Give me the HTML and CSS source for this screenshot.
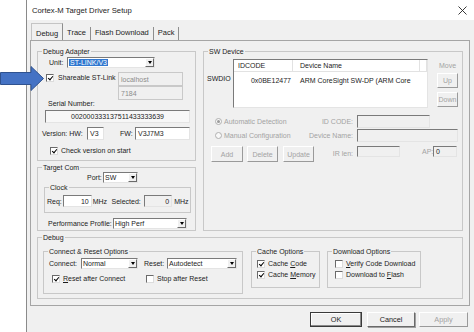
FILE: index.html
```html
<!DOCTYPE html>
<html lang="en">
<head>
  <meta charset="UTF-8" />
  <title>Cortex-M Target Driver Setup</title>
  <link rel="stylesheet" href="styles.css">
</head>
<body>
  <!-- annotation arrow pointing at the shareable checkbox -->
  <svg class="arrow" width="46" height="28" viewBox="0 0 46 28">
    <path d="M0.5 7.5 H31 V1.5 L43.5 13.5 L31 25.5 V19.5 H0.5 Z" fill="#4472c4" stroke="#2f528f" stroke-width="1"/>
  </svg>

  <div class="window">
    <div class="titlebar">
      <span>Cortex-M Target Driver Setup</span>
      <svg width="9" height="9" viewBox="0 0 9 9"><path d="M0.5 0.5 L8.5 8.5 M8.5 0.5 L0.5 8.5" stroke="#222" stroke-width="0.9"/></svg>
    </div>

    <div class="tabs">
      <span class="tab active">Debug</span>
      <span class="tab">Trace</span>
      <span class="tab">Flash Download</span>
      <span class="tab">Pack</span>
    </div>

    <div class="panel">
      <div class="top">
        <div class="col-left">
          <fieldset class="group adapter">
            <legend>Debug Adapter</legend>
            <div class="row unit-row">
              <span class="w-unit">Unit:</span>
              <span class="select sel-unit"><span class="sel-text"><span class="hl">ST-LINK/V3</span></span><span class="drop"></span></span>
            </div>
            <div class="row share-row">
              <span class="cb on"></span>
              <span class="share-text">Shareable ST-Link</span>
              <div class="stack">
                <span class="field dis">localhost</span>
                <span class="field dis">7184</span>
              </div>
            </div>
            <div class="row serial-label">Serial Number:</div>
            <div class="field serial">002000333137511433333639</div>
            <div class="row version-row">
              <span class="w-ver">Version: HW:</span>
              <span class="field hw">V3</span>
              <span class="w-fw">FW:</span>
              <span class="field fw">V3J7M3</span>
            </div>
            <div class="row check-row">
              <span class="cb on"></span><span class="cb-text">Check version on start</span>
            </div>
          </fieldset>

          <fieldset class="group target">
            <legend>Target Com</legend>
            <div class="row port-row">
              <span class="w-port">Port:</span>
              <span class="select sel-port"><span class="sel-text">SW</span><span class="drop"></span></span>
            </div>
            <fieldset class="group clock">
              <legend>Clock</legend>
              <div class="row req-row">
                <span class="w-req">Req:</span>
                <span class="field num req">10</span>
                <span class="mhz">MHz</span>
                <span class="w-sel">Selected:</span>
                <span class="field num selected">0</span>
                <span class="mhz mhz2">MHz</span>
              </div>
            </fieldset>
            <div class="row perf-row">
              <span class="w-perf">Performance Profile:</span>
              <span class="select sel-perf"><span class="sel-text">High Perf</span><span class="drop"></span></span>
            </div>
          </fieldset>
        </div>

        <fieldset class="group sw">
          <legend>SW Device</legend>
          <div class="row sw-top">
            <span class="swdio">SWDIO</span>
            <div class="list">
              <div class="list-head">
                <span class="col-id">IDCODE</span>
                <span class="col-name">Device Name</span>
                <span class="col-rest"></span>
              </div>
              <div class="list-row">
                <span class="col-id num-cell">0x0BE12477</span>
                <span class="col-name">ARM CoreSight SW-DP (ARM Core</span>
              </div>
            </div>
            <div class="move-col">
              <span class="move-label">Move</span>
              <span class="btn dis up">Up</span>
              <span class="btn dis down">Down</span>
            </div>
          </div>
          <div class="row sw-row row-a">
            <span class="sw-left"><span class="radio on"></span><span class="off-text">Automatic Detection</span></span>
            <span class="sw-label">ID CODE:</span>
            <span class="field sunk id-code"></span>
          </div>
          <div class="row sw-row row-b">
            <span class="sw-left"><span class="radio"></span><span class="off-text">Manual Configuration</span></span>
            <span class="sw-label">Device Name:</span>
            <span class="field sunk dev-name"></span>
          </div>
          <div class="row sw-row row-c">
            <span class="sw-left">
              <span class="btn dis add">Add</span>
              <span class="btn dis delete">Delete</span>
              <span class="btn dis update">Update</span>
            </span>
            <span class="sw-label">IR len:</span>
            <span class="ir-fields">
              <span class="field sunk ir-len"></span>
              <span class="off-text ap-label">AP:</span>
              <span class="field sunk ap">0</span>
            </span>
          </div>
        </fieldset>
      </div>

      <fieldset class="group debug">
        <legend>Debug</legend>
        <div class="debug-row">
          <fieldset class="group connect">
            <legend>Connect &amp; Reset Options</legend>
            <div class="row connect-row">
              <span class="w-conn">Connect:</span>
              <span class="select sel-conn"><span class="sel-text">Normal</span><span class="drop"></span></span>
              <span class="w-reset">Reset:</span>
              <span class="select sel-reset"><span class="sel-text">Autodetect</span><span class="drop"></span></span>
            </div>
            <div class="row reset-checks">
              <span class="opt opt-first"><span class="cb on"></span><span class="cb-text"><u>R</u>eset after Connect</span></span>
              <span class="opt"><span class="cb"></span><span class="cb-text">Stop after Reset</span></span>
            </div>
          </fieldset>

          <fieldset class="group cache">
            <legend>Cache Options</legend>
            <div class="row opt-row first"><span class="cb on"></span><span class="cb-text">Cache <u>C</u>ode</span></div>
            <div class="row opt-row"><span class="cb on"></span><span class="cb-text">Cache <u>M</u>emory</span></div>
          </fieldset>

          <fieldset class="group download">
            <legend>Download Options</legend>
            <div class="row opt-row first"><span class="cb"></span><span class="cb-text"><u>V</u>erify Code Download</span></div>
            <div class="row opt-row"><span class="cb"></span><span class="cb-text">Download to <u>F</u>lash</span></div>
          </fieldset>
        </div>
      </fieldset>
    </div>

    <div class="actions">
      <span class="btn big default">OK</span>
      <span class="btn big cancel">Cancel</span>
      <span class="btn big dis apply">Apply</span>
    </div>
  </div>
</body>
</html>
```

FILE: styles.css
```css
:root {
  --face: #f0f0f0;
  --line: #c8c8c8;
  --dark: #7a7a7a;
  --text: #1c1c1c;
  --off: #a3a3a3;
}

* {
  box-sizing: border-box;
}

body {
  margin: 0;
  width: 474px;
  height: 332px;
  overflow: hidden;
  position: relative;
  background: #fff;
  color: var(--text);
  font-family: "Liberation Sans", Arial, sans-serif;
  font-size: 7px;
  line-height: 9px;
}

/* annotation arrow sits on top of the window edge */
.arrow {
  position: absolute;
  left: 0;
  top: 65px;
  z-index: 5;
}

.window {
  margin-left: 26px;
  width: 448px;
  height: 332px;
  border-left: 1px solid #8a8a8a;
  background: var(--face);
}

.titlebar {
  height: 20px;
  background: #fff;
  display: flex;
  align-items: center;
  justify-content: space-between;
  padding: 0 7px 0 5px;
  font-size: 7.7px;
}

/* tabs */
.tabs {
  height: 20px;
  display: flex;
  align-items: flex-end;
  padding-left: 4px;
  font-size: 7.5px;
}

.tab {
  height: 13px;
  line-height: 12px;
  padding: 0 4px;
  border-right: 1px solid #8e8e8e;
}

.tab.active {
  height: 17px;
  padding-top: 4px;
  border-left: 1px solid #c4c4c4;
  border-top: 1px solid #c4c4c4;
}

.panel {
  margin: 0 4px 0 3px;
  height: 266px;
  border: 1px solid #a5a5a5;
  padding: 6px;
}

.top {
  display: flex;
  gap: 7px;
  height: 184px;
}

.col-left {
  width: 159px;
  display: flex;
  flex-direction: column;
  gap: 2px;
}

/* group boxes */
.group {
  margin: 0;
  padding: 0;
  min-width: 0;
  border: 1px solid var(--line);
  flex: none;
}

legend {
  margin-left: 4px;
  padding: 0 1px;
  height: 9px;
  line-height: 9px;
}

.row {
  display: flex;
  align-items: center;
  white-space: nowrap;
}

/* edit boxes */
.field {
  display: flex;
  align-items: center;
  height: 13px;
  padding: 0 2px;
  background: #fff;
  border: 1px solid;
  border-color: var(--dark) #e4e4e4 #e4e4e4 var(--dark);
}

.field.dis {
  background: var(--face);
  color: #8c8c8c;
  border-color: #c9c9c9;
  width: 65px;
  height: 14px;
}

.field.sunk {
  background: var(--face);
  color: var(--off);
}

.field.num {
  justify-content: flex-end;
}

/* combo boxes */
.select {
  display: flex;
  height: 11px;
  background: #fff;
  border: 1px solid;
  border-color: var(--dark) #e4e4e4 #e4e4e4 var(--dark);
}

.sel-text {
  flex: 1;
  padding-left: 1px;
  line-height: 9px;
  overflow: hidden;
}

.hl {
  background: #3178d0;
  color: #fff;
  padding: 0 1px;
}

.drop {
  width: 9px;
  height: 9px;
  background: var(--face);
  border: 1px solid;
  border-color: #fff #6a6a6a #6a6a6a #fff;
  display: flex;
  align-items: center;
  justify-content: center;
}

.drop::after {
  content: "";
  border-left: 2.5px solid transparent;
  border-right: 2.5px solid transparent;
  border-top: 3px solid #000;
}

/* check boxes and radios */
.cb {
  width: 8px;
  height: 8px;
  flex: none;
  background: #fff;
  border: 1px solid;
  border-color: #6a6a6a #dcdcdc #dcdcdc #6a6a6a;
  display: inline-flex;
  align-items: center;
  justify-content: center;
}

.cb.on::after {
  content: "";
  width: 2px;
  height: 4px;
  margin-top: -1px;
  border: solid #000;
  border-width: 0 1.3px 1.3px 0;
  transform: rotate(40deg);
}

.cb-text {
  margin-left: 3px;
}

.radio {
  width: 7px;
  height: 7px;
  flex: none;
  border-radius: 50%;
  border: 1px solid #b0b0b0;
  background: #f8f8f8;
  display: inline-flex;
  align-items: center;
  justify-content: center;
}

.radio.on::after {
  content: "";
  width: 3px;
  height: 3px;
  border-radius: 50%;
  background: #9a9a9a;
}

.off-text {
  color: var(--off);
}

/* push buttons */
.btn {
  display: flex;
  align-items: center;
  justify-content: center;
  background: var(--face);
  border: 1px solid;
  border-color: #fff #6a6a6a #6a6a6a #fff;
  box-shadow: 1px 1px 0 #a0a0a0;
}

.btn.dis {
  color: var(--off);
  border-color: #fff #9a9a9a #9a9a9a #fff;
  box-shadow: none;
}

/* Debug Adapter */
.adapter {
  height: 114px;
}

.unit-row {
  margin: 1px 0 0 11px;
  height: 11px;
}

.w-unit {
  width: 18px;
}

.sel-unit {
  width: 88px;
}

.share-row {
  margin-top: 4px;
  height: 28px;
  align-items: flex-start;
  padding-left: 8px;
}

.share-row .cb {
  margin-top: 2px;
}

.share-text {
  margin-left: 4px;
  line-height: 12px;
}

.stack {
  margin: 0 12px 0 auto;
  display: flex;
  flex-direction: column;
}

.serial-label {
  height: 8px;
  line-height: 8px;
  margin-left: 10px;
}

.field.serial {
  margin: 2px 5px 0 7px;
  justify-content: center;
  background: #f7f7f7;
}

.version-row {
  margin: 4px 0 0 4px;
  height: 13px;
}

.w-ver {
  width: 45px;
}

.field.hw {
  width: 17px;
}

.w-fw {
  margin-left: 16px;
  width: 15px;
}

.field.fw {
  width: 55px;
}

.check-row {
  margin: 6px 0 0 12px;
  height: 9px;
}

/* Target Com */
.target {
  height: 68px;
}

.port-row {
  height: 11px;
  margin-left: 49px;
}

.w-port {
  width: 16px;
}

.sel-port {
  width: 35px;
}

.clock {
  margin-left: 6px;
  width: 147px;
  height: 30px;
}

.req-row {
  margin: 3px 0 0 2px;
  height: 12px;
}

.w-req {
  width: 16px;
}

.field.req {
  width: 29px;
  height: 12px;
}

.mhz {
  margin-left: 1px;
  width: 16px;
}

.w-sel {
  margin-left: 3px;
  width: 33px;
}

.field.selected {
  width: 28px;
  height: 12px;
  background: var(--face);
}

.mhz2 {
  margin-left: 2px;
}

.perf-row {
  margin: 5px 0 0 10px;
  height: 11px;
}

.w-perf {
  width: 65px;
}

.sel-perf {
  width: 74px;
}

/* SW Device */
.sw {
  width: 260px;
  height: 184px;
}

.sw-top {
  margin-top: 3px;
  height: 49px;
  align-items: flex-start;
}

.swdio {
  width: 29px;
  padding-left: 3px;
  margin-top: 15px;
}

.list {
  width: 195px;
  height: 49px;
  background: #fff;
  border: 1px solid;
  border-color: var(--dark) #e4e4e4 #e4e4e4 var(--dark);
  overflow: hidden;
}

.list-head {
  display: flex;
  height: 12px;
  border-bottom: 1px solid #e2e2e2;
}

.list-head span {
  border-right: 1px solid #e2e2e2;
  line-height: 11px;
}

.col-id {
  width: 59px;
  padding-left: 4px;
  flex: none;
}

.col-name {
  width: 127px;
  padding-left: 7px;
  flex: none;
  overflow: hidden;
}

.col-rest {
  flex: 1;
}

.list-row {
  display: flex;
  padding-top: 4px;
}

.num-cell {
  text-align: right;
  padding-right: 2px;
}

.move-col {
  margin-left: 9px;
  width: 21px;
  display: flex;
  flex-direction: column;
  align-items: center;
}

.move-label {
  margin-top: 2px;
  color: var(--off);
}

.btn.up {
  margin-top: 3px;
  width: 21px;
  height: 15px;
}

.btn.down {
  margin-top: 4px;
  width: 21px;
  height: 15px;
}

.sw-row {
  height: 13px;
}

.row-a {
  margin-top: 7px;
}

.row-b {
  margin-top: 1px;
}

.row-c {
  margin-top: 4px;
  height: 16px;
  align-items: flex-start;
}

.sw-left {
  width: 104px;
  flex: none;
  display: flex;
  align-items: center;
  padding-left: 11px;
}

.sw-left .radio + span {
  margin-left: 2px;
}

.sw-label {
  width: 45px;
  text-align: right;
  color: var(--off);
  flex: none;
}

.row-c .sw-label {
  line-height: 16px;
}

.field.id-code {
  margin-left: 4px;
  width: 73px;
}

.field.dev-name {
  margin-left: 4px;
  width: 101px;
}

.row-c .sw-left {
  padding-left: 7px;
  height: 16px;
}

.btn.add {
  width: 32px;
  height: 16px;
  flex: none;
}

.btn.delete {
  margin-left: 4px;
  width: 31px;
  height: 16px;
  flex: none;
}

.btn.update {
  margin-left: 5px;
  width: 31px;
  height: 16px;
  flex: none;
}

.ir-fields {
  margin-left: 4px;
  display: flex;
  align-items: center;
}

.field.ir-len {
  width: 43px;
  height: 11px;
}

.ap-label {
  margin-left: 22px;
  width: 11px;
}

.field.ap {
  width: 24px;
  height: 11px;
  color: var(--text);
}

/* Debug */
.debug {
  margin-top: 2px;
  height: 66px;
}

.debug-row {
  display: flex;
  align-items: flex-start;
}

.connect {
  margin: 5px 0 0 5px;
  width: 200px;
  height: 47px;
}

.connect-row {
  margin: 2px 0 0 5px;
  height: 11px;
}

.w-conn {
  width: 32px;
}

.sel-conn {
  width: 57px;
}

.w-reset {
  margin-left: 6px;
  width: 23px;
}

.sel-reset {
  width: 70px;
}

.reset-checks {
  margin: 5px 0 0 8px;
  height: 9px;
}

.opt {
  display: flex;
  align-items: center;
}

.opt-first {
  width: 94px;
}

.cache {
  margin: 5px 0 0 8px;
  width: 69px;
  height: 41px;
}

.download {
  margin: 5px 0 0 7px;
  width: 94px;
  height: 41px;
}

.opt-row {
  margin: 2px 0 0 5px;
  height: 9px;
}

.opt-row.first {
  margin-top: 3px;
}

.download .opt-row {
  margin-left: 7px;
}

/* dialog buttons */
.actions {
  display: flex;
  justify-content: flex-end;
  margin-top: 6px;
  padding-right: 6px;
}

.btn.big {
  height: 15px;
  font-size: 7.3px;
}

.btn.default {
  width: 52px;
  border: 1px solid #3a3a3a;
  box-shadow: inset -1px -1px 0 #8a8a8a, inset 1px 1px 0 #fff;
}

.btn.cancel {
  margin-left: 5px;
  width: 48px;
}

.btn.apply {
  margin-left: 4px;
  width: 49px;
}
```
